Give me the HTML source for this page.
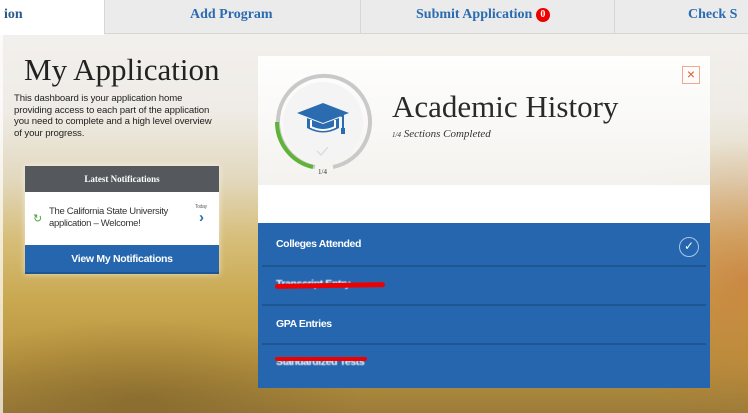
<!DOCTYPE html>
<html><head><meta charset="utf-8"><style>
*{margin:0;padding:0;box-sizing:border-box}
body{width:748px;height:413px;overflow:hidden;position:relative;font-family:"Liberation Serif",serif;
background:
radial-gradient(ellipse 160px 140px at 745px 280px,rgba(200,100,45,.5),transparent),
radial-gradient(ellipse 220px 80px at 140px 400px,rgba(110,85,35,.45),transparent),
linear-gradient(180deg,#f4f2ef 0px,#efece7 110px,#e2d8bd 180px,#d6bd78 240px,#c9a850 300px,#b99540 360px,#9c7c38 413px);}
.l{position:absolute}
.tabs{left:0;top:0;width:748px;height:34px;background:#ebebeb;border-bottom:1px solid #d6d6d6}
.tab{position:absolute;top:0;height:34px;line-height:30px;color:#2b6cb0;font-weight:bold;font-size:14px}
.div{position:absolute;top:0;width:1px;height:34px;background:#d6d6d6}
.panel{left:258px;top:56px;width:452px;height:332px}
.row{position:absolute;left:0;width:452px;color:#fff;font-family:"Liberation Sans",sans-serif;font-size:10.5px;font-weight:bold;letter-spacing:-.4px;padding-left:18px}
.sep{position:absolute;left:4px;width:444px;height:2px;background:#1e5593}
</style></head><body>
<div class="l tabs">
 <div class="l" style="left:0;top:0;width:104px;height:35px;background:#fff"></div>
 <div class="tab" style="left:4px;color:#2b5a8e">ion</div>
 <div class="div" style="left:104px"></div>
 <div class="tab" style="left:190px">Add Program</div>
 <div class="div" style="left:360px"></div>
 <div class="tab" style="left:416px">Submit Application <span style="display:inline-block;width:14px;height:14px;border-radius:50%;background:#e00;color:#fff;font-size:10px;line-height:14px;text-align:center;vertical-align:1px">0</span></div>
 <div class="div" style="left:614px"></div>
 <div class="tab" style="left:688px">Check S</div>
</div>
<div class="l" style="left:0;top:35px;width:3px;height:378px;background:rgba(255,255,255,.7)"></div>
<div class="l" style="left:24px;top:52px;font-size:31px;color:#222">My Application</div>
<div class="l" style="left:14px;top:93px;width:240px;font-family:'Liberation Sans',sans-serif;font-size:9.6px;line-height:11.5px;color:#222;letter-spacing:-.1px;white-space:nowrap">This dashboard is your application home<br>providing access to each part of the application<br>you need to complete and a high level overview<br>of your progress.</div>
<div class="l" style="left:25px;top:166px;width:194px;height:108px;box-shadow:0 0 6px rgba(255,255,255,.6)">
 <div style="height:26px;background:#55595e;color:#fff;font-size:9px;font-weight:bold;text-align:center;line-height:26px">Latest Notifications</div>
 <div style="height:53px;background:#fff;position:relative;font-family:'Liberation Sans',sans-serif;font-size:9.5px;color:#333;letter-spacing:-.3px">
  <div class="l" style="left:8px;top:20px;color:#4aa33a;font-size:11px">&#x21BB;</div>
  <div class="l" style="left:24px;top:14px;line-height:12px">The California State University<br>application – Welcome!</div>
  <div class="l" style="left:170px;top:12px;font-size:5px;color:#666">Today</div>
  <div class="l" style="left:174px;top:17px;color:#2b6cb0;font-size:15px;font-weight:bold">›</div>
 </div>
 <div style="height:29px;background:#2566ae;color:#fff;font-family:'Liberation Sans',sans-serif;font-size:10.5px;font-weight:bold;text-align:center;line-height:28px;letter-spacing:-.3px;border-bottom:2px solid #1e5593">View My Notifications</div>
</div>
<div class="l panel">
 <div class="l" style="left:0;top:0;width:452px;height:129px;background:linear-gradient(180deg,rgba(255,255,255,.92),rgba(246,245,243,.9))"></div>
 <div class="l" style="left:0;top:129px;width:452px;height:38px;background:#fff"></div>
 <div class="l" style="left:0;top:167px;width:452px;height:165px;background:#2566ae"></div>
 <svg class="l" style="left:17px;top:17px" width="100" height="100" viewBox="0 0 100 100">
  <circle cx="48" cy="49" r="40" fill="#f4f4f5"/>
  <path d="M40 94 A46 46 0 1 1 58 94" fill="none" stroke="#c9c9c9" stroke-width="4"/>
  <path d="M2 49 A46 46 0 0 0 38 94" fill="none" stroke="#5eb33a" stroke-width="4"/>
  <path d="M22 40 L48 30 L74 40 L48 50 Z" fill="#2b6cb0"/>
  <path d="M32 45 V55 Q48 64 64 55 V45 L48 51 Z" fill="#2b6cb0"/>
  <path d="M36 47 V54 Q48 60 60 54 V47" fill="none" stroke="#fff" stroke-width="2"/>
  <path d="M48 40 L68 43 V56" fill="none" stroke="#2b6cb0" stroke-width="2"/>
  <rect x="66" y="55" width="4" height="6" fill="#2b6cb0"/>
  <path d="M42 78 L46 82 L53 74" fill="none" stroke="#ddd" stroke-width="1.5"/>
 </svg>
 <div class="l" style="left:60px;top:112px;font-size:7px;color:#333">1/4</div>
 <div class="l" style="left:134px;top:33px;font-size:31px;color:#2a2a2a">Academic History</div>
 <div class="l" style="left:134px;top:72px;font-size:11px;font-style:italic;color:#333"><span style="font-size:7px">1/4</span> Sections Completed</div>
 <div class="l" style="left:424px;top:10px;width:18px;height:18px;border:1px solid #f2a88e;color:#e2552e;font-family:'Liberation Sans',sans-serif;font-size:14px;line-height:15px;text-align:center">×</div>
 <div class="row" style="top:182px">Colleges Attended</div>
 <div class="l" style="left:421px;top:181px;width:20px;height:20px;border:1.5px solid #a9c4e6;border-radius:50%;color:#fff;font-size:12px;text-align:center;line-height:17px">✓</div>
 <div class="sep" style="top:209px"></div>
 <div class="row" style="top:222px;filter:blur(.6px)">Transcript Entry</div>
 <div class="l" style="left:17px;top:227px;width:110px;height:5px;background:#e00;border-radius:3px;transform:rotate(-1deg)"></div>
 <div class="sep" style="top:248px"></div>
 <div class="row" style="top:262px">GPA Entries</div>
 <div class="sep" style="top:287px"></div>
 <div class="row" style="top:300px;filter:blur(.6px)">Standardized Tests</div>
 <div class="l" style="left:17px;top:301px;width:92px;height:4px;background:#e00;border-radius:2px"></div>
</div>
</body></html>
